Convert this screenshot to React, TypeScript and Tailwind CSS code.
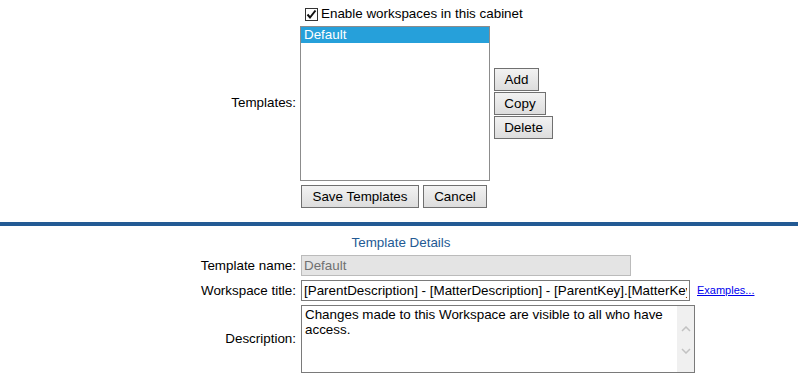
import React, { useState } from "react";

const btn =
  "h-[23px] border border-[#707070] bg-gradient-to-b from-[#f2f2f2] to-[#dddddd] text-center text-[13.4px] leading-none text-black";

const App = () => {
  const [enabled, setEnabled] = useState(true);
  const [selected, setSelected] = useState("Default");

  return (
    <div className="h-[377px] w-[802px] overflow-hidden bg-white font-['Liberation_Sans',Arial,sans-serif] text-[13.4px] text-black">
      {/* workspaces toggle */}
      <div className="flex h-[26px] items-center pl-[305px] pt-[2px]">
        <span
          onClick={() => setEnabled(!enabled)}
          className="flex h-[13px] w-[13px] items-center justify-center border border-[#333333] bg-white"
        >
          {enabled && (
            <svg width="11" height="11" viewBox="0 0 11 11">
              <path d="M1.5 5.5 L4 8.5 L9.5 1.5" fill="none" stroke="#111" strokeWidth="2" />
            </svg>
          )}
        </span>
        <span className="ml-[3px]">Enable workspaces in this cabinet</span>
      </div>

      {/* templates list */}
      <div className="flex items-center">
        <div className="w-[296px] text-right">Templates:</div>
        <div className="ml-[4px] h-[155px] w-[190px] border border-[#8c8c8c] bg-white">
          <div
            onClick={() => setSelected("Default")}
            className={
              selected === "Default"
                ? "h-[16px] bg-[#26a0da] pl-[3px] leading-[16px] text-white"
                : "h-[16px] pl-[3px] leading-[16px]"
            }
          >
            Default
          </div>
        </div>
        <div className="ml-[4px] flex flex-col items-start gap-[1px]">
          <button className={btn + " w-[45px]"}>Add</button>
          <button className={btn + " w-[52px]"}>Copy</button>
          <button className={btn + " w-[59px]"}>Delete</button>
        </div>
      </div>

      <div className="mt-[4px] flex gap-[4px] pl-[301px]">
        <button className={btn + " w-[118px]"}>Save Templates</button>
        <button className={btn + " w-[64px]"}>Cancel</button>
      </div>

      <div className="mt-[14px] h-[4px] w-[798px] bg-[#235a94]" />

      <div className="mt-[7px] text-center text-[#235a94]">Template Details</div>

      {/* details form */}
      <div className="mt-[2px] flex flex-col gap-[4px]">
        <div className="flex items-center">
          <div className="w-[296px] text-right">Template name:</div>
          <input
            disabled
            value="Default"
            className="ml-[5px] h-[21px] w-[330px] border border-[#bbbbbb] bg-[#e4e4e4] px-[2px] text-[13.4px] text-[#707070]"
          />
        </div>
        <div className="flex items-center">
          <div className="w-[296px] text-right">Workspace title:</div>
          <input
            defaultValue="[ParentDescription] - [MatterDescription] - [ParentKey].[MatterKey]"
            className="ml-[5px] h-[21px] w-[389px] border border-[#7a7a7a] bg-white px-[2px] text-[13.4px] outline-none"
          />
          <a href="#" className="ml-[7px] text-[11px] text-[#0000ee] underline">
            Examples...
          </a>
        </div>
        <div className="flex items-center">
          <div className="w-[296px] text-right">Description:</div>
          <div className="ml-[5px] flex h-[68px] w-[394px] border border-[#7a7a7a] bg-white">
            <textarea
              defaultValue="Changes made to this Workspace are visible to all who have access."
              className="h-full flex-1 resize-none overflow-hidden px-[3px] pt-[1px] text-[13.4px] leading-[15px] outline-none"
            />
            <div className="flex w-[17px] flex-col items-center gap-[16px] bg-[#f0f0f0] pt-[20px]">
              <svg width="10" height="6" viewBox="0 0 10 6">
                <path d="M1 5 L5 1 L9 5" fill="none" stroke="#c2c2c2" strokeWidth="1.5" />
              </svg>
              <svg width="10" height="6" viewBox="0 0 10 6">
                <path d="M1 1 L5 5 L9 1" fill="none" stroke="#c2c2c2" strokeWidth="1.5" />
              </svg>
            </div>
          </div>
        </div>
      </div>
    </div>
  );
};

export default App;
